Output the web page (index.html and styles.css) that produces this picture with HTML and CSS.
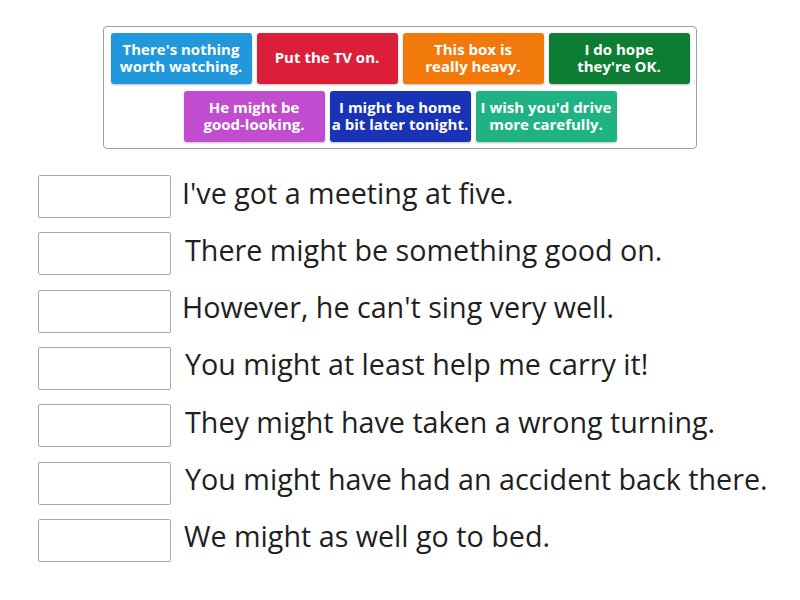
FILE: index.html
```html
<!DOCTYPE html>
<html>
<head>
<meta charset="utf-8">
<link rel="stylesheet" href="styles.css">
</head>
<body>
<div class="bank">
  <div class="tile blue">There's nothing<br>worth watching.</div>
  <div class="tile red">Put the TV on.</div>
  <div class="tile orange">This box is<br>really heavy.</div>
  <div class="tile green">I do hope<br>they're OK.</div>
  <div class="tile purple">He might be<br>good-looking.</div>
  <div class="tile navy">I might be home<br>a bit later tonight.</div>
  <div class="tile teal">I wish you'd drive<br>more carefully.</div>
</div>
<div class="list">
  <div class="row"><div class="slot"></div><div class="sentence s1">I've got a meeting at five.</div></div>
  <div class="row"><div class="slot"></div><div class="sentence s2">There might be something good on.</div></div>
  <div class="row"><div class="slot"></div><div class="sentence s1">However, he can't sing very well.</div></div>
  <div class="row"><div class="slot"></div><div class="sentence s2">You might at least help me carry it!</div></div>
  <div class="row"><div class="slot"></div><div class="sentence s2">They might have taken a wrong turning.</div></div>
  <div class="row"><div class="slot"></div><div class="sentence s2">You might have had an accident back there.</div></div>
  <div class="row"><div class="slot"></div><div class="sentence s3">We might as well go to bed.</div></div>
</div>
</body>
</html>
```
FILE: styles.css
```css
html, body {
  margin: 0;
  padding: 0;
  background: #fff;
  font-family: "Open Sans", "Noto Sans", sans-serif;
}
.bank {
  box-sizing: border-box;
  width: 594px;
  margin: 26px 0 0 103px;
  padding: 6px 6px;
  border: 1px solid #9e9e9e;
  border-radius: 4px;
  display: flex;
  flex-wrap: wrap;
  justify-content: center;
  gap: 7px 5px;
}
.tile {
  box-sizing: border-box;
  width: 141px;
  height: 51px;
  padding-bottom: 2px;
  border-radius: 3px;
  display: flex;
  align-items: center;
  justify-content: center;
  text-align: center;
  color: #fff;
  font-weight: 700;
  font-size: 15px;
  line-height: 17px;
  box-shadow: 0 1px 2px rgba(0,0,0,0.25);
}
.blue { background: #2197dc; }
.red { background: #db1f39; }
.orange { background: #f27a0c; }
.green { background: #0e7d33; }
.purple { background: #c14ccf; }
.navy { background: #1933b7; }
.teal { background: #1fb283; }
.list {
  margin: 26px 0 0 38px;
  display: flex;
  flex-direction: column;
  gap: 14.33px;
}
.row {
  display: flex;
  align-items: center;
}
.slot {
  box-sizing: border-box;
  width: 133px;
  height: 43px;
  border: 1px solid #a8a8a8;
  border-radius: 2px;
  background: #fff;
}
.sentence {
  font-size: 28.7px;
  color: #1f1f1f;
  line-height: 34px;
  padding-bottom: 8px;
  white-space: nowrap;
}
.s1 { margin-left: 11px; }
.s2 { margin-left: 14px; }
.s3 { margin-left: 13px; }
```
